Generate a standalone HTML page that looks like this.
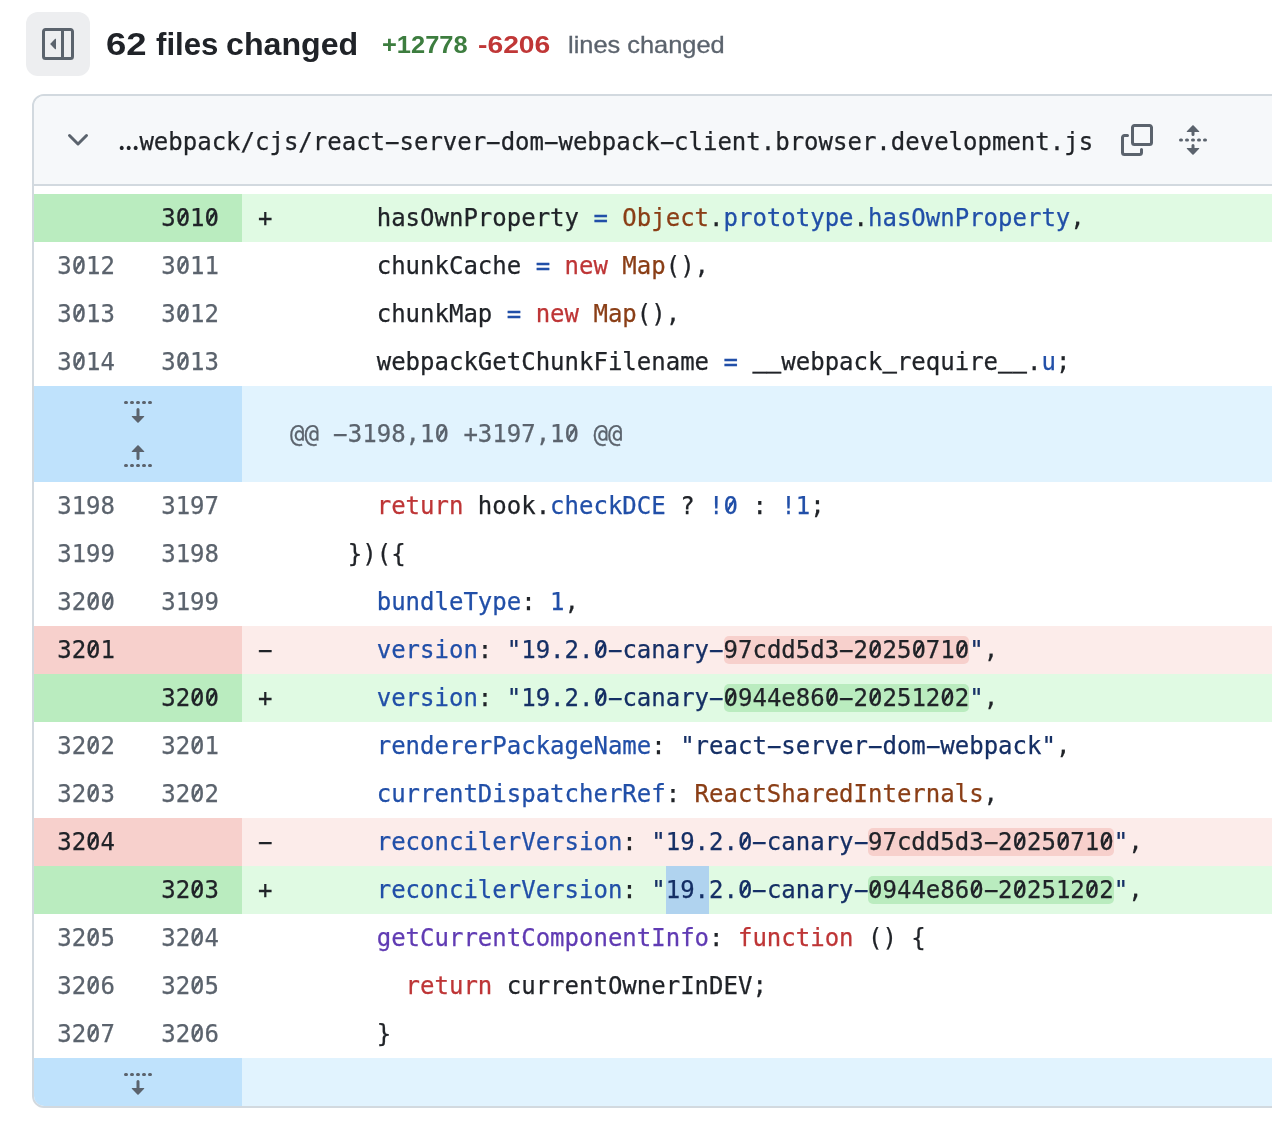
<!DOCTYPE html>
<html lang="en">
<head>
<meta charset="utf-8">
<title>62 files changed</title>
<style>
  html, body { margin: 0; padding: 0; background: #ffffff; }
  body {
    width: 1272px; height: 1126px; overflow: hidden; position: relative;
    font-family: "Liberation Sans", sans-serif; color: #202328;
    -webkit-font-smoothing: antialiased; will-change: transform;
  }
  svg { display: block; fill: currentColor; }
  .abs { position: absolute; }

  /* top bar */
  .sidebtn {
    position: absolute; left: 26px; top: 12px; width: 64px; height: 64px;
    border-radius: 12px; background: #edeef0; color: #5b636d;
  }
  .sidebtn svg { position: absolute; left: 16px; top: 16px; width: 32px; height: 32px; }
  .t {
    position: absolute; white-space: nowrap; transform-origin: 0 50%;
    display: inline-block;
  }
  .title {
    top: 22px; height: 44px; line-height: 44px;
    font-size: 32px; font-weight: 700; color: #202328;
  }
  .w { display: inline-block; position: relative; transform-origin: 0 50%; }
  .st { top: 28px; height: 34px; line-height: 34px; font-size: 24px; }
  .add { color: #3d7d3f; font-weight: 700; }
  .del { color: #c03737; font-weight: 700; }
  .muted { color: #5b636d; -webkit-text-stroke: 0.3px; }

  /* file box */
  .box {
    position: absolute; left: 32px; top: 94px; width: 1400px; height: 1010px;
    border: 2px solid #d2d9df; border-radius: 12px; background: #ffffff;
    overflow: hidden;
  }
  .hdr {
    position: absolute; left: 0; top: 0; width: 100%; height: 88px;
    background: #f6f8fa; border-bottom: 2px solid #d2d9df;
  }
  .hdr .chev { position: absolute; left: 28px; top: 28px; width: 32px; height: 32px; color: #5b636d; }
  .hdr .path {
    position: absolute; left: 84px; top: 28px; height: 36px; line-height: 36px;
    font-family: "DejaVu Sans Mono", "Liberation Mono", monospace; font-size: 24px;
    white-space: pre; color: #202328; -webkit-text-stroke: 0.25px;
  }
  .ell { font-family: "DejaVu Serif", serif; font-weight: 700; font-size: 21.4px; display: inline-block; width: 21.4px; -webkit-text-stroke: 0; }
  .hdr .ic { position: absolute; width: 32px; height: 32px; color: #5b636d; }

  /* diff rows */
  .rows { position: absolute; left: 0; top: 98px; width: 100%; }
  .r {
    position: relative; height: 48px; line-height: 48px;
    font-family: "DejaVu Sans Mono", "Liberation Mono", monospace; font-size: 24px;
    white-space: pre; color: #202328; -webkit-text-stroke: 0.25px;
  }
  .n {
    position: absolute; top: 0; height: 100%; width: 104px; box-sizing: border-box;
    padding-right: 23px; text-align: right; color: #5b636d;
  }
  .n1 { left: 0; }
  .n2 { left: 104px; }
  .c {
    position: absolute; left: 208px; right: 0; top: 0; height: 100%;
    padding-left: 48px;
  }
  .m { position: absolute; left: 16px; top: 0; }
  .r.a .n { background: #baecbf; color: #202328; }
  .r.a .c { background: #e0fae3; }
  .r.d .n { background: #f7d0cc; color: #202328; }
  .r.d .c { background: #fcecea; }
  .r.h .n { background: #bfe2fc; }
  .r.h .c { background: #e1f3fe; color: #5b636d; }
  .r.h2 { height: 96px; line-height: 96px; }
  .r.h .hn { position: absolute; left: 0; top: 0; width: 208px; height: 100%; background: #bfe2fc; color: #5b636d; }
  .r.h .hn svg { position: absolute; left: 88px; width: 32px; height: 32px; }
  .wa { background: #baecbf; border-radius: 5px; color: #202328; }
  .wd { background: #f7d0cc; border-radius: 5px; color: #202328; }
  .sel { background: #b0d3ef; padding: 10.03px 0; }
  .us { display: inline-block; transform-origin: 50% 37.6px; transform: translateY(-2.5px) scaleY(1.5); }
  .z { background: linear-gradient(to bottom right, transparent calc(50% - 1.5px), currentColor calc(50% - 0.7px), currentColor calc(50% + 0.7px), transparent calc(50% + 1.5px)) no-repeat; background-size: 8.2px 13.4px; background-position: 50% calc(50% - 1px); }
  .hy { display: inline-block; transform: scaleX(2.0); }

  .k { color: #be3536; }
  .c1 { color: #214fa8; }
  .en { color: #603bb3; }
  .v { color: #8a3e16; }
  .s { color: #152f65; }
</style>
</head>
<body>

<div class="sidebtn">
  <svg viewBox="0 0 16 16"><path d="m4.177 7.823 2.396-2.396A.25.25 0 0 1 7 5.604v4.792a.25.25 0 0 1-.427.177L4.177 8.177a.25.25 0 0 1 0-.354Z"/><path d="M0 1.75C0 .784.784 0 1.75 0h12.5C15.216 0 16 .784 16 1.75v12.5A1.75 1.75 0 0 1 14.25 16H1.75A1.75 1.75 0 0 1 0 14.25Zm1.75-.25a.25.25 0 0 0-.25.25v12.5c0 .138.112.25.25.25H9.5v-13Zm12.5 13a.25.25 0 0 0 .25-.25V1.75a.25.25 0 0 0-.25-.25H11v13Z"/></svg>
</div>
<div class="t title" style="left:106.3px"><span class="w" style="transform:scaleX(1.14)">62</span> <span class="w" style="left:5px;transform:scaleX(0.975)">files</span> <span class="w" style="left:2.3px;transform:scaleX(1.005)">changed</span></div>
<div class="t st" style="left:382px"><span class="w add" style="transform:scaleX(1.06)">+12778</span> <span class="w del" style="left:8.8px;transform:scaleX(1.178)">-6206</span> <span class="w muted" style="left:30.3px;transform:scaleX(1.058)">lines changed</span></div>

<div class="box">
  <div class="hdr">
    <svg class="chev" viewBox="0 0 16 16"><path d="M12.78 5.22a.749.749 0 0 1 0 1.06l-4.25 4.25a.749.749 0 0 1-1.06 0L3.22 6.28a.749.749 0 1 1 1.06-1.06L8 8.939l3.72-3.719a.749.749 0 0 1 1.06 0Z"/></svg>
    <div class="path"><span class="ell">…</span>webpack/cjs/react<span class="hy">-</span>server<span class="hy">-</span>dom<span class="hy">-</span>webpack<span class="hy">-</span>client.browser.development.js</div>
    <svg class="ic" style="left:1087px;top:28px" viewBox="0 0 16 16"><path d="M0 6.75C0 5.784.784 5 1.75 5h1.5a.75.75 0 0 1 0 1.5h-1.5a.25.25 0 0 0-.25.25v7.5c0 .138.112.25.25.25h7.5a.25.25 0 0 0 .25-.25v-1.5a.75.75 0 0 1 1.5 0v1.5A1.75 1.75 0 0 1 9.25 16h-7.5A1.75 1.75 0 0 1 0 14.25Z"/><path d="M5 1.75C5 .784 5.784 0 6.75 0h7.5C15.216 0 16 .784 16 1.75v7.5A1.75 1.75 0 0 1 14.25 11h-7.5A1.75 1.75 0 0 1 5 9.25Zm1.75-.25a.25.25 0 0 0-.25.25v7.5c0 .138.112.25.25.25h7.5a.25.25 0 0 0 .25-.25v-7.5a.25.25 0 0 0-.25-.25Z"/></svg>
    <svg class="ic" style="left:1143px;top:28px" viewBox="0 0 16 16"><path d="m8.177.677 2.896 2.896a.25.25 0 0 1-.177.427H8.750v1.250a.75.75 0 0 1-1.500 0V4H5.104a.25.25 0 0 1-.177-.427L7.823.677a.25.25 0 0 1 .354 0ZM7.250 10.750a.75.75 0 0 1 1.500 0V12h2.146a.25.25 0 0 1 .177.427l-2.896 2.896a.25.25 0 0 1-.354 0l-2.896-2.896A.25.25 0 0 1 5.104 12H7.250v-1.250Zm-5-2a.75.75 0 0 0 0-1.500h-.500a.75.75 0 0 0 0 1.500h.500ZM6 8a.75.75 0 0 1-.750.750h-.500a.75.75 0 0 1 0-1.500h.500A.75.75 0 0 1 6 8Zm2.250.750a.75.75 0 0 0 0-1.500h-.500a.75.75 0 0 0 0 1.500h.500ZM12 8a.75.75 0 0 1-.750.750h-.500a.75.75 0 0 1 0-1.500h.500A.75.75 0 0 1 12 8Zm2.250.750a.75.75 0 0 0 0-1.500h-.500a.75.75 0 0 0 0 1.500h.500Z"/></svg>
  </div>

  <div class="rows">
    <div class="r a"><div class="n n1"></div><div class="n n2">3<span class="z">0</span>1<span class="z">0</span></div><div class="c"><span class="m">+</span>      hasOwnProperty <span class="c1">=</span> <span class="v">Object</span>.<span class="c1">prototype</span>.<span class="c1">hasOwnProperty</span>,</div></div>
    <div class="r"><div class="n n1">3<span class="z">0</span>12</div><div class="n n2">3<span class="z">0</span>11</div><div class="c">      chunkCache <span class="c1">=</span> <span class="k">new</span> <span class="v">Map</span>(),</div></div>
    <div class="r"><div class="n n1">3<span class="z">0</span>13</div><div class="n n2">3<span class="z">0</span>12</div><div class="c">      chunkMap <span class="c1">=</span> <span class="k">new</span> <span class="v">Map</span>(),</div></div>
    <div class="r"><div class="n n1">3<span class="z">0</span>14</div><div class="n n2">3<span class="z">0</span>13</div><div class="c">      webpackGetChunkFilename <span class="c1">=</span> <span class="us">_</span><span class="us">_</span>webpack<span class="us">_</span>require<span class="us">_</span><span class="us">_</span>.<span class="c1">u</span>;</div></div>
    <div class="r h h2"><div class="hn">
      <svg style="top:8px" viewBox="0 0 16 16"><path d="m8.177 14.323 2.896-2.896a.25.25 0 0 0-.177-.427H8.750V7.764a.75.75 0 1 0-1.500 0V11H5.104a.25.25 0 0 0-.177.427l2.896 2.896a.25.25 0 0 0 .354 0ZM2.250 5a.75.75 0 0 0 0-1.500h-.500a.75.75 0 0 0 0 1.500h.500ZM6 4.250a.75.75 0 0 1-.750.750h-.500a.75.75 0 0 1 0-1.500h.500a.75.75 0 0 1 .750.750ZM8.250 5a.75.75 0 0 0 0-1.500h-.500a.75.75 0 0 0 0 1.500h.500ZM12 4.250a.75.75 0 0 1-.750.750h-.500a.75.75 0 0 1 0-1.500h.500a.75.75 0 0 1 .750.750Zm2.250.750a.75.75 0 0 0 0-1.500h-.500a.75.75 0 0 0 0 1.500h.500Z"/></svg>
      <svg style="top:56px" viewBox="0 0 16 16"><path d="M7.823 1.677 4.927 4.573A.25.25 0 0 0 5.104 5H7.250v3.236a.75.75 0 1 0 1.500 0V5h2.146a.25.25 0 0 0 .177-.427L8.177 1.677a.25.25 0 0 0-.354 0ZM13.750 11a.75.75 0 0 0 0 1.500h.500a.75.75 0 0 0 0-1.500h-.500Zm-3.750.750a.75.75 0 0 1 .750-.750h.500a.75.75 0 0 1 0 1.500h-.500a.75.75 0 0 1-.750-.750ZM7.750 11a.75.75 0 0 0 0 1.500h.500a.75.75 0 0 0 0-1.500h-.500ZM4 11.750a.75.75 0 0 1 .750-.750h.500a.75.75 0 0 1 0 1.500h-.500a.75.75 0 0 1-.750-.750ZM1.750 11a.75.75 0 0 0 0 1.500h.500a.75.75 0 0 0 0-1.500h-.500Z"/></svg>
    </div><div class="c">@@ <span class="hy">-</span>3198,1<span class="z">0</span> +3197,1<span class="z">0</span> @@</div></div>
    <div class="r"><div class="n n1">3198</div><div class="n n2">3197</div><div class="c">      <span class="k">return</span> hook.<span class="c1">checkDCE</span> ? <span class="c1">!<span class="z">0</span></span> : <span class="c1">!1</span>;</div></div>
    <div class="r"><div class="n n1">3199</div><div class="n n2">3198</div><div class="c">    })({</div></div>
    <div class="r"><div class="n n1">32<span class="z">0</span><span class="z">0</span></div><div class="n n2">3199</div><div class="c">      <span class="c1">bundleType</span>: <span class="c1">1</span>,</div></div>
    <div class="r d"><div class="n n1">32<span class="z">0</span>1</div><div class="n n2"></div><div class="c"><span class="m"><span class="hy">-</span></span>      <span class="c1">version</span>: <span class="s">"19.2.<span class="z">0</span><span class="hy">-</span>canary<span class="hy">-</span><span class="wd">97cdd5d3<span class="hy">-</span>2<span class="z">0</span>25<span class="z">0</span>71<span class="z">0</span></span>"</span>,</div></div>
    <div class="r a"><div class="n n1"></div><div class="n n2">32<span class="z">0</span><span class="z">0</span></div><div class="c"><span class="m">+</span>      <span class="c1">version</span>: <span class="s">"19.2.<span class="z">0</span><span class="hy">-</span>canary<span class="hy">-</span><span class="wa"><span class="z">0</span>944e86<span class="z">0</span><span class="hy">-</span>2<span class="z">0</span>2512<span class="z">0</span>2</span>"</span>,</div></div>
    <div class="r"><div class="n n1">32<span class="z">0</span>2</div><div class="n n2">32<span class="z">0</span>1</div><div class="c">      <span class="c1">rendererPackageName</span>: <span class="s">"react<span class="hy">-</span>server<span class="hy">-</span>dom<span class="hy">-</span>webpack"</span>,</div></div>
    <div class="r"><div class="n n1">32<span class="z">0</span>3</div><div class="n n2">32<span class="z">0</span>2</div><div class="c">      <span class="c1">currentDispatcherRef</span>: <span class="v">ReactSharedInternals</span>,</div></div>
    <div class="r d"><div class="n n1">32<span class="z">0</span>4</div><div class="n n2"></div><div class="c"><span class="m"><span class="hy">-</span></span>      <span class="c1">reconcilerVersion</span>: <span class="s">"19.2.<span class="z">0</span><span class="hy">-</span>canary<span class="hy">-</span><span class="wd">97cdd5d3<span class="hy">-</span>2<span class="z">0</span>25<span class="z">0</span>71<span class="z">0</span></span>"</span>,</div></div>
    <div class="r a"><div class="n n1"></div><div class="n n2">32<span class="z">0</span>3</div><div class="c"><span class="m">+</span>      <span class="c1">reconcilerVersion</span>: <span class="s">"<span class="sel">19.</span>2.<span class="z">0</span><span class="hy">-</span>canary<span class="hy">-</span><span class="wa"><span class="z">0</span>944e86<span class="z">0</span><span class="hy">-</span>2<span class="z">0</span>2512<span class="z">0</span>2</span>"</span>,</div></div>
    <div class="r"><div class="n n1">32<span class="z">0</span>5</div><div class="n n2">32<span class="z">0</span>4</div><div class="c">      <span class="en">getCurrentComponentInfo</span>: <span class="k">function</span> () {</div></div>
    <div class="r"><div class="n n1">32<span class="z">0</span>6</div><div class="n n2">32<span class="z">0</span>5</div><div class="c">        <span class="k">return</span> currentOwnerInDEV;</div></div>
    <div class="r"><div class="n n1">32<span class="z">0</span>7</div><div class="n n2">32<span class="z">0</span>6</div><div class="c">      }</div></div>
    <div class="r h"><div class="hn">
      <svg style="top:8px" viewBox="0 0 16 16"><path d="m8.177 14.323 2.896-2.896a.25.25 0 0 0-.177-.427H8.750V7.764a.75.75 0 1 0-1.500 0V11H5.104a.25.25 0 0 0-.177.427l2.896 2.896a.25.25 0 0 0 .354 0ZM2.250 5a.75.75 0 0 0 0-1.500h-.500a.75.75 0 0 0 0 1.500h.500ZM6 4.250a.75.75 0 0 1-.750.750h-.500a.75.75 0 0 1 0-1.500h.500a.75.75 0 0 1 .750.750ZM8.250 5a.75.75 0 0 0 0-1.500h-.500a.75.75 0 0 0 0 1.500h.500ZM12 4.250a.75.75 0 0 1-.750.750h-.500a.75.75 0 0 1 0-1.500h.500a.75.75 0 0 1 .750.750Zm2.250.750a.75.75 0 0 0 0-1.500h-.500a.75.75 0 0 0 0 1.500h.500Z"/></svg>
    </div><div class="c"></div></div>
  </div>
</div>

</body>
</html>
